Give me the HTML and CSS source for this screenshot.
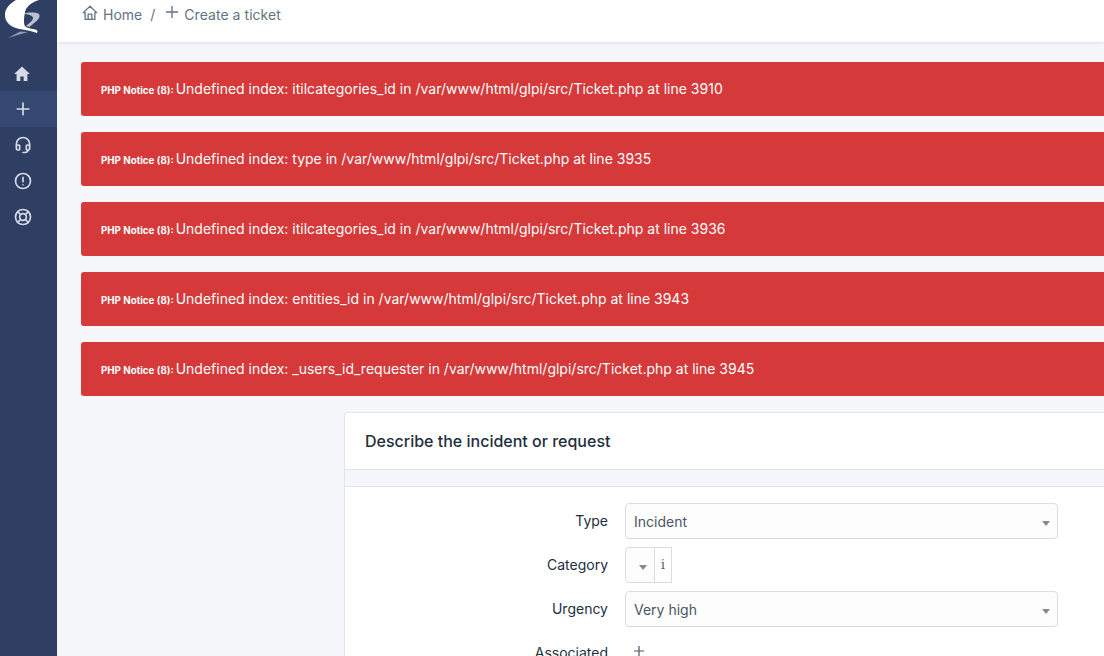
FILE: index.html
```html
<!DOCTYPE html>
<html lang="en">
<head>
<meta charset="utf-8">
<title>Create a ticket</title>
<link rel="stylesheet" href="styles.css">
</head>
<body>
<div class="app">
  <aside class="sidebar">
    <div class="logo">
      <svg width="42" height="40" viewBox="0 0 42 40">
        <path class="logo-m" d="M23 13.500 C28 12 36 12 38.500 13.500 C40.500 15.500 39.500 18.500 36 21.500 C33.500 23.800 31 25.500 29.500 27 L26 26 C29 23.500 33 20.500 33 18 C33 15.500 29 14.500 23 13.500 Z"/>
        <path class="logo-w" d="M16 0 C9 4 4.500 9 5 16 C5.500 22 10 26 16 28 C22 29.800 31 30.500 37 33 C38 31.500 37.500 30.200 36 29.700 C32 28.800 28 28.200 26 27 C23 25 24 18 25 12 C26 7 31 2.500 39 0 Z"/>
        <path class="logo-d" d="M8 38 L20 31.500 L28 32 Z"/>
      </svg>
    </div>
    <nav class="nav">
      <a class="nav-item">
        <svg class="home-icon" width="20" height="20" viewBox="0 0 24 24"><path class="fill" d="M12 3 L2.500 12 H5.500 V20.500 H10 V15 H14 V20.500 H18.500 V12 H21.500 Z"/></svg>
      </a>
      <a class="nav-item active">
        <svg width="20" height="20" viewBox="0 0 24 24"><path class="stroke" d="M12 5v14M5 12h14"/></svg>
      </a>
      <a class="nav-item">
        <svg width="20" height="20" viewBox="0 0 24 24"><path class="stroke" d="M4 14v-3a8 8 0 0 1 16 0v3M4 14a2 2 0 0 1 2-2h1a1 1 0 0 1 1 1v4a1 1 0 0 1-1 1H6a2 2 0 0 1-2-2zM20 14a2 2 0 0 0-2-2h-1a1 1 0 0 0-1 1v4a1 1 0 0 0 1 1h1a2 2 0 0 0 2-2zM18 18a4 3 0 0 1-4 3h-2"/></svg>
      </a>
      <a class="nav-item">
        <svg width="20" height="20" viewBox="0 0 24 24"><circle class="stroke" cx="12" cy="12" r="9"/><path class="stroke" d="M12 7.500v5.500M12 16.500v.01"/></svg>
      </a>
      <a class="nav-item">
        <svg width="20" height="20" viewBox="0 0 24 24"><circle class="stroke" cx="12" cy="12" r="9"/><circle class="stroke" cx="12" cy="12" r="4"/><path class="stroke" d="M15 15l3.500 3.500M9 15l-3.500 3.500M15 9l3.500-3.500M9 9L5.500 5.500"/></svg>
      </a>
    </nav>
  </aside>
  <main class="main">
    <header class="topbar">
      <svg class="crumb-icon" width="18" height="18" viewBox="0 0 24 24"><path d="M3 11.500l9-8.500 9 8.500h-2.500v9h-13v-9zM9.500 13.500h5v7h-5z"/></svg>
      <span class="crumb crumb-home">Home</span>
      <span class="crumb sep">/</span>
      <svg class="crumb-icon plus" width="18" height="18" viewBox="0 0 24 24"><path d="M12 4.500v15M4.500 12h15"/></svg>
      <span class="crumb crumb-now">Create a ticket</span>
    </header>
    <section class="alerts">
      <div class="alert"><b>PHP Notice (8):</b><span>Undefined index: itilcategories_id in /var/www/html/glpi/src/Ticket.php at line 3910</span></div>
      <div class="alert"><b>PHP Notice (8):</b><span>Undefined index: type in /var/www/html/glpi/src/Ticket.php at line 3935</span></div>
      <div class="alert"><b>PHP Notice (8):</b><span>Undefined index: itilcategories_id in /var/www/html/glpi/src/Ticket.php at line 3936</span></div>
      <div class="alert"><b>PHP Notice (8):</b><span>Undefined index: entities_id in /var/www/html/glpi/src/Ticket.php at line 3943</span></div>
      <div class="alert"><b>PHP Notice (8):</b><span>Undefined index: _users_id_requester in /var/www/html/glpi/src/Ticket.php at line 3945</span></div>
    </section>
    <section class="card">
      <h3 class="card-title">Describe the incident or request</h3>
      <div class="strip"></div>
      <div class="form">
        <label class="lbl">Type</label>
        <div class="select"><span>Incident</span><i class="caret"></i></div>
        <label class="lbl">Category</label>
        <div class="combo"><div class="combo-sel"><i class="caret"></i></div><div class="combo-info">i</div></div>
        <label class="lbl">Urgency</label>
        <div class="select"><span>Very high</span><i class="caret"></i></div>
        <label class="lbl">Associated</label>
        <svg class="add" width="14" height="14" viewBox="0 0 14 14"><path d="M7 2v10M2 7h10"/></svg>
      </div>
    </section>
  </main>
</div>
</body>
</html>
```
FILE: styles.css
```css
* { box-sizing: border-box; }
html, body { margin: 0; height: 100%; overflow: hidden; }
body { font-family: Inter, "Liberation Sans", sans-serif; font-size: 14px; color: #1e293b; background: #f5f7fb; }
.app { display: flex; width: 1104px; height: 656px; overflow: hidden; }
.sidebar { flex: 0 0 57px; background: #2f3f63; display: flex; flex-direction: column; }
.logo { height: 55px; }
.logo svg { display: block; }
.logo-w { fill: #fff; }
.logo-m { fill: #b9c1d0; }
.logo-d { fill: #8f99ad; }
.nav { display: flex; flex-direction: column; }
.nav-item { height: 36px; display: flex; align-items: center; padding-left: 13px; }
.nav-item.active { background: #364871; }
.home-icon { margin: 2px 0 0 -1px; }
.fill { fill: #d4dbe6; }
.stroke { fill: none; stroke: #d4dbe6; stroke-width: 2; stroke-linecap: round; stroke-linejoin: round; }
.main { flex: 1; min-width: 0; }
.topbar { height: 42px; background: #fff; box-shadow: 0 1px 4px rgba(30, 41, 59, .12); display: flex; align-items: flex-start; padding: 5px 0 0 24px; color: #667382; }
.crumb { line-height: 20px; }
.crumb-home { margin-left: 4px; }
.crumb-now { letter-spacing: .05px; margin-left: 1px; }
.sep { margin: 0 8px 0 8px; }
.crumb-icon { fill: none; stroke: #667382; stroke-width: 1.800; stroke-linecap: round; stroke-linejoin: round; margin-top: -1px; }
.crumb-icon.plus { margin-right: 2px; margin-top: -2px; }
.alerts { display: flex; flex-direction: column; gap: 16px; padding: 20px 0 0 24px; width: 1100px; }
.alert { height: 54px; background: #d63939; color: #fff; border-radius: 3px; padding: 0 20px 2px; display: flex; align-items: center; gap: 2px; white-space: nowrap; }
.alert b { font-size: 9.750px; font-weight: 700; margin-top: 4px; }
.card { margin: 16px 0 0 287px; width: 800px; height: 300px; background: #fff; border: 1px solid #e2e4e8; border-radius: 3px; }
.card-title { margin: 0; height: 56px; display: flex; align-items: center; padding-left: 20px; font-size: 16px; font-weight: 500; color: #232e3c; }
.strip { height: 18px; background: #f5f6f9; border-top: 1px solid #e2e4e8; border-bottom: 1px solid #e2e4e8; }
.form { display: grid; grid-template-columns: 263px 433px; grid-auto-rows: 36px; column-gap: 17px; row-gap: 8px; padding-top: 16px; align-items: center; }
.lbl { text-align: right; color: #232e3c; margin-top: -2px; }
.select { height: 36px; background: #fdfdfd; border: 1px solid #dcdcdc; border-radius: 4px; display: flex; align-items: center; justify-content: space-between; padding: 0 7px 0 8px; color: #4b5665; }
.caret { width: 0; height: 0; border-left: 4px solid transparent; border-right: 4px solid transparent; border-top: 5px solid #888; margin-top: 4px; }
.combo { display: flex; height: 36px; width: 47px; }
.combo-sel { flex: 0 0 30px; background: #fdfdfd; border: 1px solid #dcdcdc; border-radius: 4px 0 0 4px; display: flex; align-items: center; justify-content: flex-end; padding-right: 7px; }
.combo-info { flex: 1; border: 1px solid #dcdcdc; border-left: 0; display: flex; align-items: center; justify-content: center; font-family: "DejaVu Serif", serif; font-size: 12px; color: #4b5665; }
.add { fill: none; stroke: #4b5665; stroke-width: 1.200; margin: -4px 0 0 7px; }
```
